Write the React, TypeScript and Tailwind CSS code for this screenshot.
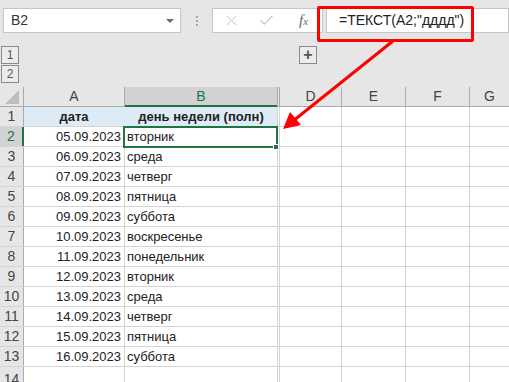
import { X, Check } from "lucide-react";

const data: [string, string][] = [
  ["05.09.2023", "вторник"],
  ["06.09.2023", "среда"],
  ["07.09.2023", "четверг"],
  ["08.09.2023", "пятница"],
  ["09.09.2023", "суббота"],
  ["10.09.2023", "воскресенье"],
  ["11.09.2023", "понедельник"],
  ["12.09.2023", "вторник"],
  ["13.09.2023", "среда"],
  ["14.09.2023", "четверг"],
  ["15.09.2023", "пятница"],
  ["16.09.2023", "суббота"],
];

function EmptyCells() {
  return (
    <>
      <div className="w-[3px] shrink-0 border-l border-r border-[#d4d4d4]" />
      <div className="w-[62px] shrink-0 border-r border-[#d4d4d4]" />
      <div className="w-[64px] shrink-0 border-r border-[#d4d4d4]" />
      <div className="w-[64px] shrink-0 border-r border-[#d4d4d4]" />
      <div className="flex-1" />
    </>
  );
}

export default function App() {
  return (
    <div className="relative w-[509px] h-[382px] overflow-hidden bg-white font-['Liberation_Sans',sans-serif] text-[#222]">
      {/* toolbar */}
      <div className="h-[87px] bg-[#e6e6e6] relative">
        <div className="flex pt-[8px] h-[33px]">
          <div className="ml-[3px] w-[178px] h-[25px] bg-white border border-[#c6c6c6] flex items-center justify-between pl-[7px] pr-[6px] text-[14px] text-[#333]">
            <span>B2</span>
            <span className="w-0 h-0 border-l-[4px] border-r-[4px] border-t-[4px] border-l-transparent border-r-transparent border-t-[#6b6b6b]" />
          </div>
          <div className="w-[31px] flex flex-col items-center justify-center gap-[2px]">
            <span className="w-[2px] h-[2px] bg-[#a6a6a6]" />
            <span className="w-[2px] h-[2px] bg-[#a6a6a6]" />
            <span className="w-[2px] h-[2px] bg-[#a6a6a6]" />
          </div>
          <div className="w-[111px] h-[25px] bg-white border border-[#c6c6c6] flex items-center pl-[10px]">
            <X size={17} strokeWidth={1.4} className="text-[#c4c4c4]" />
            <Check size={17} strokeWidth={1.6} className="text-[#c4c4c4] ml-[18px]" />
            <span className="ml-[24px] font-['Liberation_Serif',serif] italic text-[15px] text-[#666]">
              f<span className="text-[11px]">x</span>
            </span>
          </div>
          <div className="flex-1 ml-[3px] h-[25px] bg-white border border-[#c6c6c6] flex items-center pl-[12px] text-[14px] text-[#222]">
            =ТЕКСТ(A2;"дддд")
          </div>
        </div>
        <div className="flex mt-[13px]">
          <div className="ml-[1px] flex flex-col gap-[1px]">
            <div className="w-[18px] h-[18px] border border-[#8a8a8a] bg-[#ececec] flex items-center justify-center text-[12px] text-[#555]">
              1
            </div>
            <div className="w-[18px] h-[18px] border border-[#8a8a8a] bg-[#ececec] flex items-center justify-center text-[12px] text-[#555]">
              2
            </div>
          </div>
          <div className="ml-[280px] w-[18px] h-[18px] border border-[#8a8a8a] bg-[#ececec] flex items-center justify-center text-[16px] font-bold text-[#555] leading-none">
            +
          </div>
        </div>
      </div>

      {/* column headers */}
      <div className="flex h-[20px] bg-[#e6e6e6] border-b border-[#ababab] text-[14px] text-[#444]">
        <div className="w-[24px] shrink-0 border-r border-[#ababab] relative">
          <svg className="absolute left-[4px] top-[3px]" width="15" height="14">
            <polygon points="15,0 15,14 1,14" fill="#bdbdbd" />
          </svg>
        </div>
        <div className="w-[101px] shrink-0 border-r border-[#ababab] flex items-center justify-center">A</div>
        <div className="w-[152px] shrink-0 bg-[#d2d2d2] border-b-2 border-[#217346] -mb-px flex items-center justify-center text-[#217346]">
          B
        </div>
        <div className="w-[3px] shrink-0 border-l border-r border-[#ababab]" />
        <div className="w-[62px] shrink-0 border-r border-[#ababab] flex items-center justify-center">D</div>
        <div className="w-[64px] shrink-0 border-r border-[#ababab] flex items-center justify-center">E</div>
        <div className="w-[64px] shrink-0 border-r border-[#ababab] flex items-center justify-center">F</div>
        <div className="flex-1 flex items-center justify-center">G</div>
      </div>

      {/* row 1 */}
      <div className="flex h-[20px] border-b border-[#d4d4d4] text-[13px]">
        <div className="w-[24px] shrink-0 bg-[#e6e6e6] border-r border-[#ababab] flex items-center justify-center text-[14px] text-[#444]">
          1
        </div>
        <div className="w-[101px] shrink-0 bg-[#ddebf7] border-r border-[#ddebf7] flex items-center justify-center font-bold">
          дата
        </div>
        <div className="w-[152px] shrink-0 bg-[#ddebf7] flex items-center justify-center font-bold whitespace-nowrap">
          день недели (полн)
        </div>
        <EmptyCells />
      </div>

      {data.map(([d, day], i) => (
        <div key={i} className="flex h-[20px] border-b border-[#d4d4d4] text-[13px]">
          <div
            className={
              i === 0
                ? "w-[24px] shrink-0 bg-[#d2d2d2] border-r-2 border-[#217346] flex items-center justify-center text-[14px] text-[#217346]"
                : "w-[24px] shrink-0 bg-[#e6e6e6] border-r border-[#ababab] flex items-center justify-center text-[14px] text-[#444]"
            }
          >
            {i + 2}
          </div>
          <div className="w-[101px] shrink-0 border-r border-[#d4d4d4] flex items-center justify-end pr-[3px]">{d}</div>
          <div className="w-[152px] shrink-0 flex items-center pl-[2px]">{day}</div>
          <EmptyCells />
        </div>
      ))}

      <div className="flex h-[20px] text-[13px]">
        <div className="w-[24px] shrink-0 bg-[#e6e6e6] border-r border-[#ababab] flex items-start pt-[2px] justify-center text-[14px] text-[#444]">
          14
        </div>
        <div className="w-[101px] shrink-0 border-r border-[#d4d4d4]" />
        <div className="w-[152px] shrink-0" />
        <EmptyCells />
      </div>

      {/* selection */}
      <div className="absolute left-[123px] top-[126px] w-[155px] h-[22px] border-2 border-[#217346]" />
      <div className="absolute left-[273px] top-[144px] w-[6px] h-[6px] bg-[#217346] border border-white" />

      {/* annotation */}
      <div className="absolute left-[317px] top-[6px] w-[157px] h-[36px] border-[3px] border-[#ff0000] rounded-[2px]" />
      <svg className="absolute left-0 top-0" width="509" height="382">
        <line x1="393" y1="41" x2="293" y2="121" stroke="#ff0000" strokeWidth="3" />
        <polygon points="283,129 290,112 301,125" fill="#ff0000" />
      </svg>
    </div>
  );
}
